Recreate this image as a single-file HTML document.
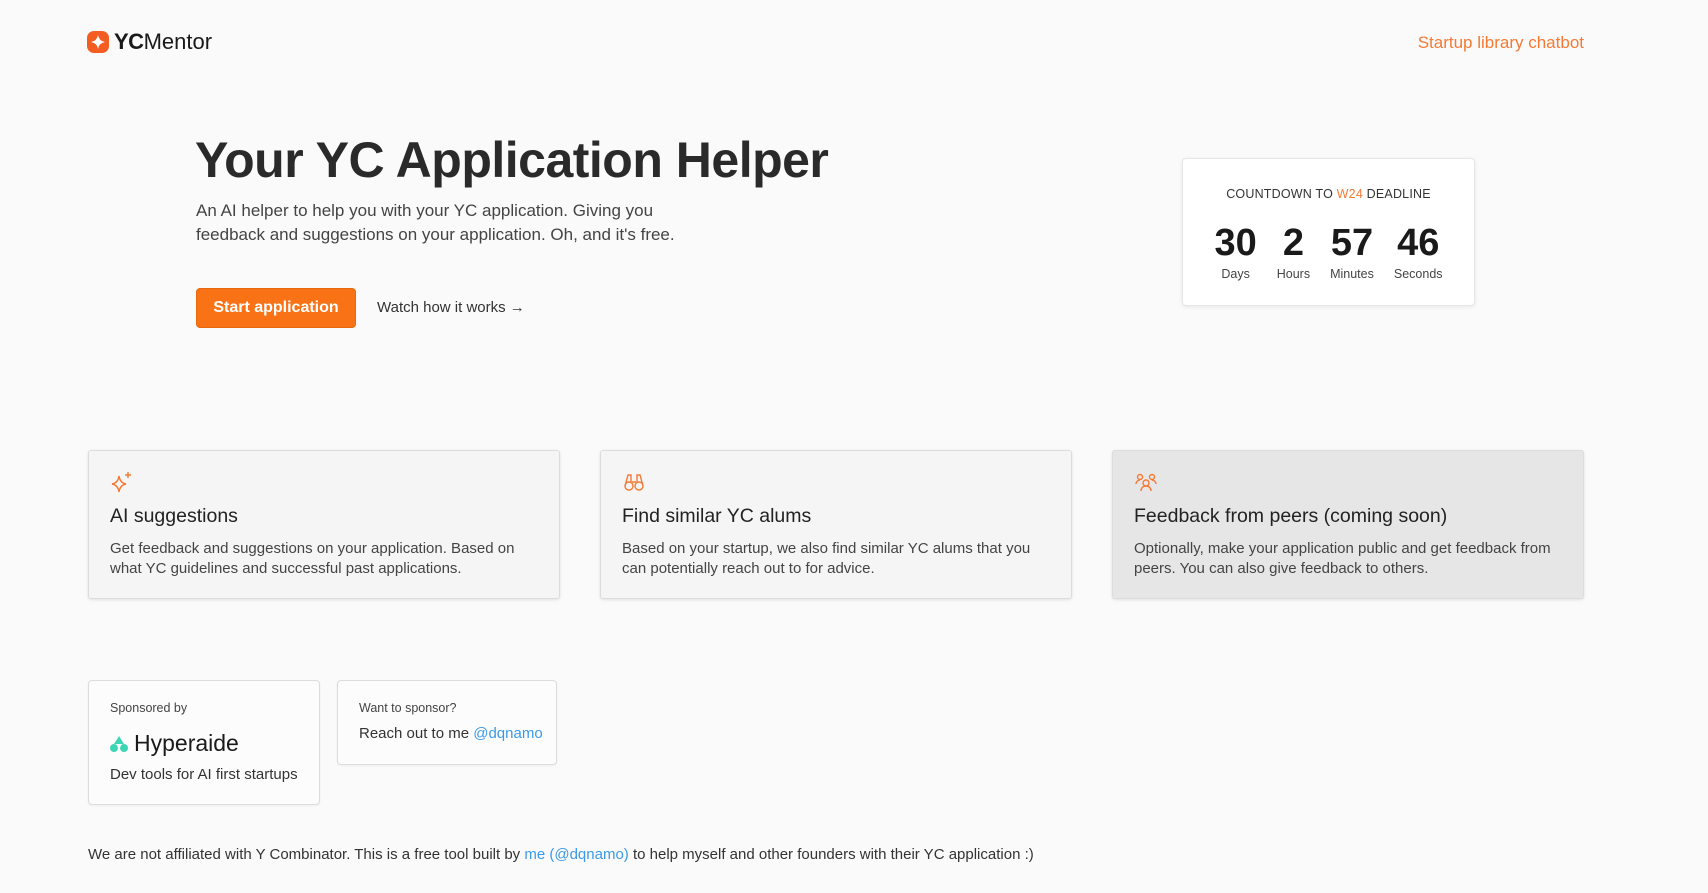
<!DOCTYPE html>
<html><head><meta charset="utf-8"><style>
*{box-sizing:border-box;margin:0;padding:0}
body{width:1708px;height:893px;background:#fafafa;font-family:"Liberation Sans",sans-serif;color:#333;position:relative;overflow:hidden}
.abs{position:absolute}
.logo{left:87px;top:29px;display:flex;align-items:center;font-size:22px;color:#1a1a1a}
.logo b{font-weight:700;letter-spacing:-0.5px}
.nav{right:124px;top:33px;color:#f47a35;font-size:17px}
h1{left:195px;top:131px;font-size:50px;font-weight:700;color:#2a2a2a;letter-spacing:-0.5px}
.sub{left:196px;top:199px;font-size:17px;line-height:24px;color:#444;width:500px}
.btn{left:196px;top:288px;width:160px;height:40px;background:#f97316;color:#fff;border-radius:4px;font-size:16px;font-weight:700;display:flex;align-items:center;justify-content:center;border:1px solid #e86a10}
.watch{left:377px;top:299px;font-size:15px;color:#333}
.cd{left:1182px;top:158px;width:293px;height:148px;background:#fff;border:1px solid #e6e6e6;border-radius:4px;box-shadow:0 1px 4px rgba(0,0,0,.08);text-align:center}
.cd .t{font-size:12.5px;color:#333;margin-top:28px;letter-spacing:.2px}
.nums{display:flex;justify-content:center;gap:20px;margin-top:22px}
.nums div{display:flex;flex-direction:column;align-items:center}
.nums b{font-size:38px;font-weight:700;color:#1a1a1a;line-height:40px}
.nums span{font-size:12.5px;color:#444;margin-top:4px}
.card{top:450px;width:472px;height:149px;background:#f5f5f5;border:1px solid #dcdcdc;border-radius:3px;box-shadow:0 1px 3px rgba(0,0,0,.1);padding:19px 21px}
.card h3{font-size:19.5px;font-weight:400;color:#222;margin-top:6px}
.card p{font-size:15px;line-height:20px;color:#444;margin-top:11px}
.sp{top:680px;background:#fcfcfc;border:1px solid #dcdcdc;border-radius:4px;padding:20px 21px;box-shadow:0 1px 2px rgba(0,0,0,.05)}
.small{font-size:12.5px;color:#444}
.foot{left:88px;top:846px;font-size:15px;color:#333}
a{color:#3b9ae8;text-decoration:none}
</style></head><body>
<div class="abs logo"><svg width="22" height="22" viewBox="0 0 22 22" style="margin-right:5px"><rect x="0" y="0" width="22" height="22" rx="7" fill="#f45d22"/><path d="M11 4 Q12 10 18 11 Q12 12 11 18 Q10 12 4 11 Q10 10 11 4Z" fill="#fff"/></svg><b>YC</b>Mentor</div>
<div class="abs nav">Startup library chatbot</div>
<h1 class="abs">Your YC Application Helper</h1>
<div class="abs sub">An AI helper to help you with your YC application. Giving you feedback and suggestions on your application. Oh, and it's free.</div>
<div class="abs btn">Start application</div>
<div class="abs watch">Watch how it works &#8594;</div>
<div class="abs cd"><div class="t">COUNTDOWN TO <span style="color:#f47a35">W24</span> DEADLINE</div>
<div class="nums"><div><b>30</b><span>Days</span></div><div><b>2</b><span>Hours</span></div><div><b>57</b><span>Minutes</span></div><div><b>46</b><span>Seconds</span></div></div></div>
<div class="abs card" style="left:88px"><svg width="24" height="24" viewBox="0 0 24 24" fill="none" stroke="#f47a35" stroke-width="1.4"><path d="M9 6 Q10 13 16 14 Q10 15 9 22 Q8 15 2 14 Q8 13 9 6Z"/><path d="M18 2v6M15 5h6"/></svg><h3>AI suggestions</h3><p>Get feedback and suggestions on your application. Based on what YC guidelines and successful past applications.</p></div>
<div class="abs card" style="left:600px"><svg width="24" height="24" viewBox="0 0 24 24" fill="none" stroke="#f47a35" stroke-width="1.4"><circle cx="7" cy="16" r="4"/><circle cx="17" cy="16" r="4"/><path d="M3 16 L6 5h3v7M21 16L18 5h-3v7M10 12h4"/></svg><h3>Find similar YC alums</h3><p>Based on your startup, we also find similar YC alums that you can potentially reach out to for advice.</p></div>
<div class="abs card" style="left:1112px;background:#e6e6e6"><svg width="24" height="24" viewBox="0 0 24 24" fill="none" stroke="#f47a35" stroke-width="1.4"><circle cx="12" cy="13" r="3"/><circle cx="6" cy="7" r="2.5"/><circle cx="18" cy="7" r="2.5"/><path d="M7 21c0-3 2-5 5-5s5 2 5 5M2 14c0-2 2-4 4-4M22 14c0-2-2-4-4-4"/></svg><h3>Feedback from peers (coming soon)</h3><p>Optionally, make your application public and get feedback from peers. You can also give feedback to others.</p></div>
<div class="abs sp" style="left:88px;width:232px;height:125px"><div class="small">Sponsored by</div>
<div style="display:flex;align-items:center;margin-top:15px;font-size:23px;color:#1a1a1a"><svg width="18" height="18" viewBox="0 0 18 18" style="margin-right:6px"><path d="M9 1 L14 9 L4 9Z" fill="#3dd6b5"/><circle cx="4" cy="13" r="4" fill="#3dd6b5"/><circle cx="14" cy="13" r="4" fill="#3dd6b5"/><path d="M7 11 L11 11 L9 14Z" fill="#fff"/></svg>Hyperaide</div>
<div style="font-size:15px;color:#333;margin-top:9px">Dev tools for AI first startups</div></div>
<div class="abs sp" style="left:337px;width:220px;height:85px"><div class="small">Want to sponsor?</div><div style="font-size:15px;margin-top:10px;white-space:nowrap">Reach out to me <a>@dqnamo</a></div></div>
<div class="abs foot">We are not affiliated with Y Combinator. This is a free tool built by <a>me (@dqnamo)</a> to help myself and other founders with their YC application :)</div>
</body></html>
